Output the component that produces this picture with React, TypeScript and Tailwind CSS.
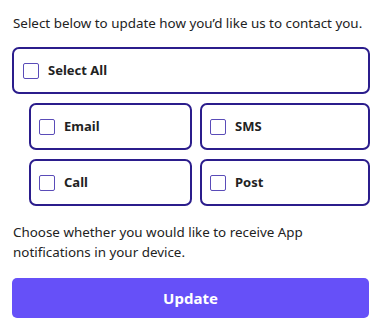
import { useState } from 'react';

const options = [
  { key: 'email', label: 'Email' },
  { key: 'sms', label: 'SMS' },
  { key: 'call', label: 'Call' },
  { key: 'post', label: 'Post' },
];

const Box = ({ checked }: { checked: boolean }) => (
  <span className="flex h-[16px] w-[16px] shrink-0 items-center justify-center rounded-[2px] border border-[#5a4cb8] bg-white">
    {checked && (
      <svg viewBox="0 0 12 12" className="h-[11px] w-[11px]">
        <path d="M2 6.2l2.6 2.6L10 3.4" fill="none" stroke="#2b1d8c" strokeWidth="1.8" />
      </svg>
    )}
  </span>
);

const App = () => {
  const [selected, setSelected] = useState<Record<string, boolean>>({});
  const allOn = options.every((o) => selected[o.key]);

  const toggleAll = () => {
    const next: Record<string, boolean> = {};
    options.forEach((o) => (next[o.key] = !allOn));
    setSelected(next);
  };

  return (
    <div className="w-[377px] bg-white pl-[12px] pt-[13px] text-[#222] font-['Noto_Sans',sans-serif]">
      <p className="pl-px text-[13.4px] leading-[20px]">Select below to update how you’d like us to contact you.</p>

      <button
        onClick={toggleAll}
        className="mt-[14px] flex h-[47px] w-[358px] items-center gap-[9px] rounded-[7px] border-2 border-[#2b1d8c] pl-[9px] text-left"
      >
        <Box checked={allOn} />
        <span className="text-[13px] font-bold">Select All</span>
      </button>

      <div className="mt-[9px] ml-[17px] grid grid-cols-[163px_170px] gap-x-[8px] gap-y-[9px]">
        {options.map((o) => (
          <button
            key={o.key}
            onClick={() => setSelected({ ...selected, [o.key]: !selected[o.key] })}
            className="flex h-[47px] items-center gap-[9px] rounded-[7px] border-2 border-[#2b1d8c] pl-[8px] text-left"
          >
            <Box checked={!!selected[o.key]} />
            <span className="text-[13px] font-bold">{o.label}</span>
          </button>
        ))}
      </div>

      <p className="mt-[16px] w-[358px] pl-px text-[13.4px] leading-[20px]">
        Choose whether you would like to receive App notifications in your device.
      </p>

      <button className="mt-[16px] h-[40px] w-[357px] rounded-[5px] bg-[#6650f8] text-[15px] font-bold text-white">
        Update
      </button>
    </div>
  );
};

export default App;
